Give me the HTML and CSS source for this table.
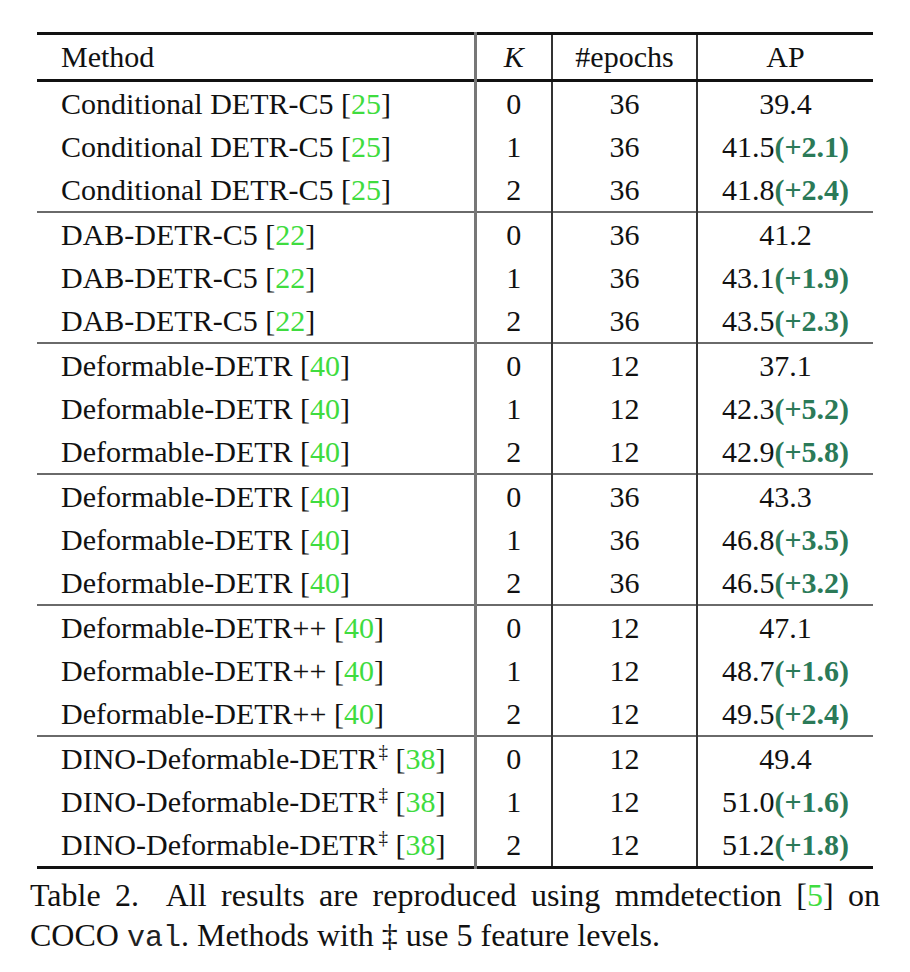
FILE: index.html
```html
<!DOCTYPE html>
<html>
<head>
<meta charset="utf-8">
<link rel="stylesheet" href="styles.css">
</head>
<body>
<div class="page">
<table class="results">
  <colgroup>
    <col class="c-method"><col class="c-k"><col class="c-ep"><col class="c-ap">
  </colgroup>
  <thead>
    <tr><th class="method">Method</th><th class="k"><i>K</i></th><th>#epochs</th><th>AP</th></tr>
  </thead>
  <tbody>
    <tr><td class="method">Conditional DETR-C5 [<span class="cite">25</span>]</td><td class="k">0</td><td>36</td><td>39.4</td></tr>
    <tr><td class="method">Conditional DETR-C5 [<span class="cite">25</span>]</td><td class="k">1</td><td>36</td><td>41.5<b class="gain">(+2.1)</b></td></tr>
    <tr><td class="method">Conditional DETR-C5 [<span class="cite">25</span>]</td><td class="k">2</td><td>36</td><td>41.8<b class="gain">(+2.4)</b></td></tr>
  </tbody>
  <tbody class="grp">
    <tr><td class="method">DAB-DETR-C5 [<span class="cite">22</span>]</td><td class="k">0</td><td>36</td><td>41.2</td></tr>
    <tr><td class="method">DAB-DETR-C5 [<span class="cite">22</span>]</td><td class="k">1</td><td>36</td><td>43.1<b class="gain">(+1.9)</b></td></tr>
    <tr><td class="method">DAB-DETR-C5 [<span class="cite">22</span>]</td><td class="k">2</td><td>36</td><td>43.5<b class="gain">(+2.3)</b></td></tr>
  </tbody>
  <tbody class="grp">
    <tr><td class="method">Deformable-DETR [<span class="cite">40</span>]</td><td class="k">0</td><td>12</td><td>37.1</td></tr>
    <tr><td class="method">Deformable-DETR [<span class="cite">40</span>]</td><td class="k">1</td><td>12</td><td>42.3<b class="gain">(+5.2)</b></td></tr>
    <tr><td class="method">Deformable-DETR [<span class="cite">40</span>]</td><td class="k">2</td><td>12</td><td>42.9<b class="gain">(+5.8)</b></td></tr>
  </tbody>
  <tbody class="grp">
    <tr><td class="method">Deformable-DETR [<span class="cite">40</span>]</td><td class="k">0</td><td>36</td><td>43.3</td></tr>
    <tr><td class="method">Deformable-DETR [<span class="cite">40</span>]</td><td class="k">1</td><td>36</td><td>46.8<b class="gain">(+3.5)</b></td></tr>
    <tr><td class="method">Deformable-DETR [<span class="cite">40</span>]</td><td class="k">2</td><td>36</td><td>46.5<b class="gain">(+3.2)</b></td></tr>
  </tbody>
  <tbody class="grp">
    <tr><td class="method">Deformable-DETR++ [<span class="cite">40</span>]</td><td class="k">0</td><td>12</td><td>47.1</td></tr>
    <tr><td class="method">Deformable-DETR++ [<span class="cite">40</span>]</td><td class="k">1</td><td>12</td><td>48.7<b class="gain">(+1.6)</b></td></tr>
    <tr><td class="method">Deformable-DETR++ [<span class="cite">40</span>]</td><td class="k">2</td><td>12</td><td>49.5<b class="gain">(+2.4)</b></td></tr>
  </tbody>
  <tbody class="grp">
    <tr><td class="method">DINO-Deformable-DETR<sup class="dag">‡</sup> [<span class="cite">38</span>]</td><td class="k">0</td><td>12</td><td>49.4</td></tr>
    <tr><td class="method">DINO-Deformable-DETR<sup class="dag">‡</sup> [<span class="cite">38</span>]</td><td class="k">1</td><td>12</td><td>51.0<b class="gain">(+1.6)</b></td></tr>
    <tr><td class="method">DINO-Deformable-DETR<sup class="dag">‡</sup> [<span class="cite">38</span>]</td><td class="k">2</td><td>12</td><td>51.2<b class="gain">(+1.8)</b></td></tr>
  </tbody>
</table>
<p class="caption">Table 2.<span class="gap"></span> All results are reproduced using mmdetection [<span class="cite">5</span>]<span> on</span> <span>COCO</span> <code class="mono">val</code>. Methods with ‡ use 5 feature levels.</p>
</div>
</body>
</html>
```
FILE: styles.css
```css
html, body {
  margin: 0;
  padding: 0;
  background: #ffffff;
}

.page {
  padding: 32px 0 0 30px;
  width: 850px;
  font-family: "Liberation Serif", "Times New Roman", serif;
  color: #111111;
}

.results {
  margin-left: 7px;
  width: 836px;
  border-collapse: collapse;
  table-layout: fixed;
  border-top: 3px solid #111;
  border-bottom: 3px solid #111;
  font-size: 30px;
}

.c-method { width: 438px; }
.c-k { width: 77px; }
.c-ep { width: 145px; }
.c-ap { width: 176px; }

.results thead tr {
  border-bottom: 3px solid #111;
}

.results th {
  font-weight: normal;
  height: 44px;
  line-height: 44px;
}

.results th,
.results td {
  padding: 0;
  text-align: center;
  white-space: nowrap;
  border-left: 2px solid #333;
}

.results td {
  height: 43px;
  line-height: 43px;
}

.results th.method,
.results td.method {
  text-align: left;
  padding-left: 24px;
  border-left: none;
}

.results .k {
  border-left: 3px solid #777;
}

.results tbody.grp {
  border-top: 2px solid #6a6a6a;
}

.cite {
  color: #3fdc3f;
}

.gain {
  color: #2b7a58;
  font-weight: bold;
}

.dag {
  font-size: 19px;
  line-height: 0;
  vertical-align: 11px;
  margin-left: 1px;
}

.caption {
  margin: 6px 0 0 0;
  width: 850px;
  font-size: 32px;
  line-height: 40px;
  text-align: justify;
  color: #111;
}

.caption .gap {
  display: inline-block;
  width: 14px;
}

.mono {
  font-family: "Liberation Mono", "Courier New", monospace;
  font-size: 30px;
  color: #222;
}
```
